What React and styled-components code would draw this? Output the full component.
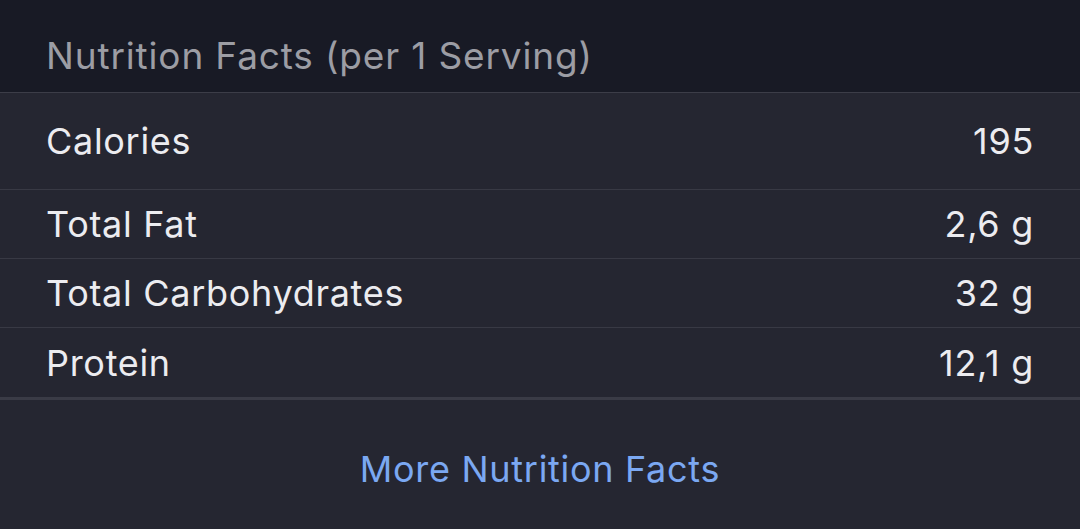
import React from "react";
import styled, { createGlobalStyle } from "styled-components";

const Global = createGlobalStyle`
  html, body { margin: 0; padding: 0; background: #252631; }
  body { font-family: Inter, "Noto Sans", sans-serif; -webkit-font-smoothing: antialiased; }
`;

const Page = styled.div`
  width: 1080px;
  height: 529px;
  display: flex;
  flex-direction: column;
  background: #252631;
  overflow: hidden;
`;

const Header = styled.div`
  height: 93px;
  box-sizing: border-box;
  background: #181a25;
  border-bottom: 1px solid #3c3d48;
  display: flex;
  align-items: center;
  padding: 19px 46px 0 46px;
  color: #9c9da4;
  font-size: 37px;
  letter-spacing: 0.85px;
`;

const List = styled.div`
  display: flex;
  flex-direction: column;
  border-bottom: 3px solid #3a3b46;
`;

const Row = styled.div`
  height: ${(p) => p.$h}px;
  box-sizing: border-box;
  display: flex;
  align-items: center;
  justify-content: space-between;
  padding: 0 46px;
  border-bottom: ${(p) => (p.$last ? "none" : "1px solid #383944")};
  color: #ececf0;
  font-size: 36px;
  letter-spacing: 0.7px;
`;

const Footer = styled.div`
  flex: 1;
  display: flex;
  align-items: center;
  justify-content: center;
  color: #7ba8f2;
  font-size: 36px;
  letter-spacing: 0.7px;
  padding-top: 8px;
`;

const rows = [
  ["Calories", "195", 97],
  ["Total Fat", "2,6 g", 69],
  ["Total Carbohydrates", "32 g", 69],
  ["Protein", "12,1 g", 69],
];

export default function App() {
  return (
    <Page>
      <Global />
      <Header>Nutrition Facts (per 1 Serving)</Header>
      <List>
        {rows.map(([label, value, h], i) => (
          <Row key={label} $h={h} $last={i === rows.length - 1}>
            <span>{label}</span>
            <span>{value}</span>
          </Row>
        ))}
      </List>
      <Footer>More Nutrition Facts</Footer>
    </Page>
  );
}
